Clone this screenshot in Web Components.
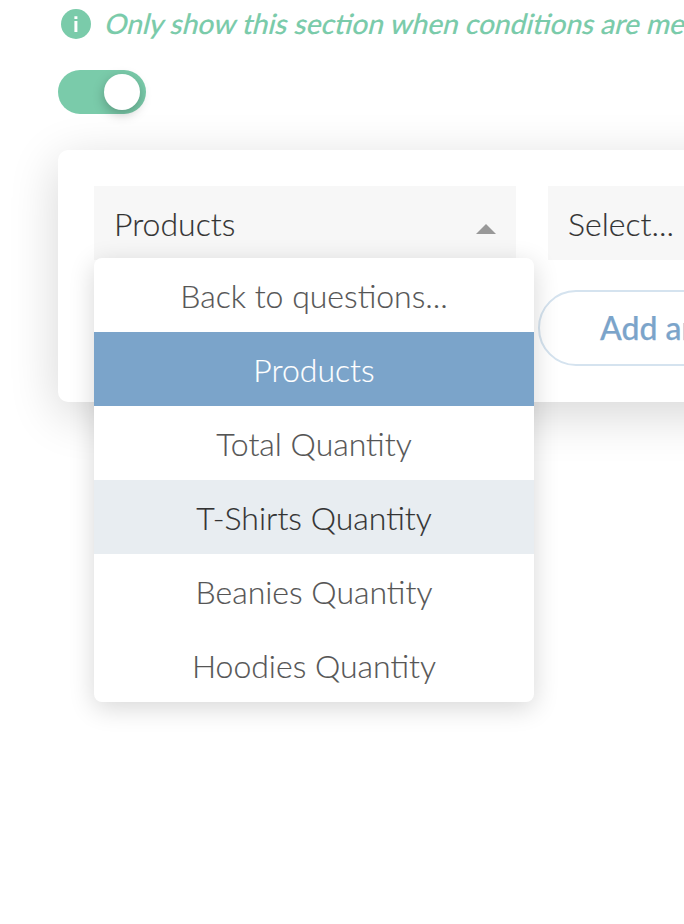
<!DOCTYPE html>
<html lang="en">
<head>
<meta charset="utf-8">
<title>Section conditions</title>
<style>
    body {
        margin: 0;
        overflow: hidden;
        background: #fff;
        color: #333;
        font-family: Lato, "Liberation Sans", sans-serif;
        font-size: 32px;
        font-weight: 300;
    }
</style>
</head>
<body>
<condition-section>
    <section-hint slot="hint">Only show this section when conditions are met</section-hint>
    <toggle-switch slot="toggle" checked></toggle-switch>
    <select-box open>
        Products
        <option-list slot="menu">
            <option-item>Back to questions...</option-item>
            <option-item selected>Products</option-item>
            <option-item>Total Quantity</option-item>
            <option-item hovered>T-Shirts Quantity</option-item>
            <option-item>Beanies Quantity</option-item>
            <option-item>Hoodies Quantity</option-item>
        </option-list>
    </select-box>
    <select-box>Select...</select-box>
    <pill-button slot="actions">Add another</pill-button>
</condition-section>

<script>
class BaseElement extends HTMLElement {
    constructor() {
        super();
        const root = document.createElement('template');
        root.innerHTML = this.constructor.template;
        this.attachShadow({mode: 'open'}).append(root.content.cloneNode(true));
    }

    static define(tag) {
        customElements.define(tag, this);
    }
}

class ConditionSection extends BaseElement {
    static template = `
        <style>
            :host {
                display: flex;
                flex-direction: column;
                height: 924px;
                padding-left: 58px;
                box-sizing: border-box;
                overflow: hidden;
            }
            .toggle {
                display: flex;
                padding: 22px 0 36px;
            }
            .card {
                width: 948px;
                height: 252px;
                box-sizing: border-box;
                padding: 36px;
                border-radius: 10px;
                background: #fff;
                box-shadow: 0 12px 50px rgba(0, 0, 0, .165);
            }
            .fields {
                display: flex;
                gap: 32px;
            }
            .actions {
                display: flex;
                padding: 30px 0 0 444px;
            }
        </style>
        <slot name="hint"></slot>
        <div class="toggle"><slot name="toggle"></slot></div>
        <div class="card">
            <div class="fields"><slot></slot></div>
            <div class="actions"><slot name="actions"></slot></div>
        </div>
    `;
}

class SectionHint extends BaseElement {
    static template = `
        <style>
            :host {
                display: flex;
                align-items: center;
                gap: 15px;
                height: 48px;
                padding-left: 3px;
                color: #7acbaa;
                font-size: 28px;
                font-weight: 500;
                white-space: nowrap;
                -webkit-text-stroke: .1px currentColor;
            }
            svg {
                flex: none;
            }
            /* slanted upright face, wider than the true italic */
            span {
                display: inline-block;
                padding-bottom: 2px;
                transform: skewX(-14deg);
            }
        </style>
        <svg width="30" height="30" viewBox="0 0 30 30">
            <circle cx="15" cy="15" r="15" fill="#7acbaa"/>
            <path d="M13.4 7.2h3v2.8h-3zM13.4 12h3v11h-3z" fill="#fff"/>
        </svg>
        <span><slot></slot></span>
    `;
}

class ToggleSwitch extends BaseElement {
    static template = `
        <style>
            :host {
                display: flex;
                align-items: center;
                width: 88px;
                height: 44px;
                padding: 0 6px;
                box-sizing: border-box;
                border-radius: 22px;
                background: #ccc;
            }
            :host([checked]) {
                justify-content: flex-end;
                background: #7acbaa;
            }
            .knob {
                width: 36px;
                height: 36px;
                border-radius: 50%;
                background: #fff;
                box-shadow: 0 4px 12px rgba(0, 0, 0, .25);
            }
        </style>
        <div class="knob"></div>
    `;
}

class SelectBox extends BaseElement {
    static template = `
        <style>
            :host {
                display: block;
                position: relative;
                flex: none;
                width: 422px;
                height: 74px;
                background: #f7f7f7;
                -webkit-text-stroke: .15px currentColor;
            }
            .value {
                display: flex;
                align-items: center;
                justify-content: space-between;
                height: 100%;
                padding: 0 20px;
                box-sizing: border-box;
            }
            .arrow {
                margin-top: 12px;
                border: 10px solid transparent;
                border-top-color: #999;
                border-bottom: 0;
            }
            :host([open]) .arrow {
                border-top: 0;
                border-bottom: 10px solid #999;
            }
            ::slotted([slot="menu"]) {
                position: absolute;
                top: 72px;
                left: 0;
                z-index: 1;
            }
        </style>
        <div class="value"><span><slot></slot></span><i class="arrow"></i></div>
        <slot name="menu"></slot>
    `;
}

class OptionList extends BaseElement {
    static template = `
        <style>
            :host {
                display: flex;
                flex-direction: column;
                width: 440px;
                border-radius: 8px;
                background: #fff;
                box-shadow: 0 6px 26px rgba(0, 0, 0, .16);
                overflow: hidden;
            }
        </style>
        <slot></slot>
    `;
}

class OptionItem extends BaseElement {
    static template = `
        <style>
            :host {
                display: flex;
                align-items: center;
                justify-content: center;
                height: 74px;
                color: #555;
                -webkit-text-stroke: .15px currentColor;
            }
            :host([hovered]) {
                background: #e8edf1;
                color: #333;
            }
            :host([selected]) {
                background: #7ba4ca;
                color: #fff;
            }
        </style>
        <span><slot></slot></span>
    `;
}

class PillButton extends BaseElement {
    static template = `
        <style>
            :host {
                display: flex;
                align-items: center;
                height: 76px;
                padding: 0 60px 2px;
                box-sizing: border-box;
                border: 2px solid #d5e3ef;
                border-radius: 38px;
                color: #7ba4ca;
                font-weight: 500;
                white-space: nowrap;
                -webkit-text-stroke: .25px currentColor;
            }
        </style>
        <slot></slot>
    `;
}

ConditionSection.define('condition-section');
SectionHint.define('section-hint');
ToggleSwitch.define('toggle-switch');
SelectBox.define('select-box');
OptionList.define('option-list');
OptionItem.define('option-item');
PillButton.define('pill-button');
</script>
</body>
</html>
